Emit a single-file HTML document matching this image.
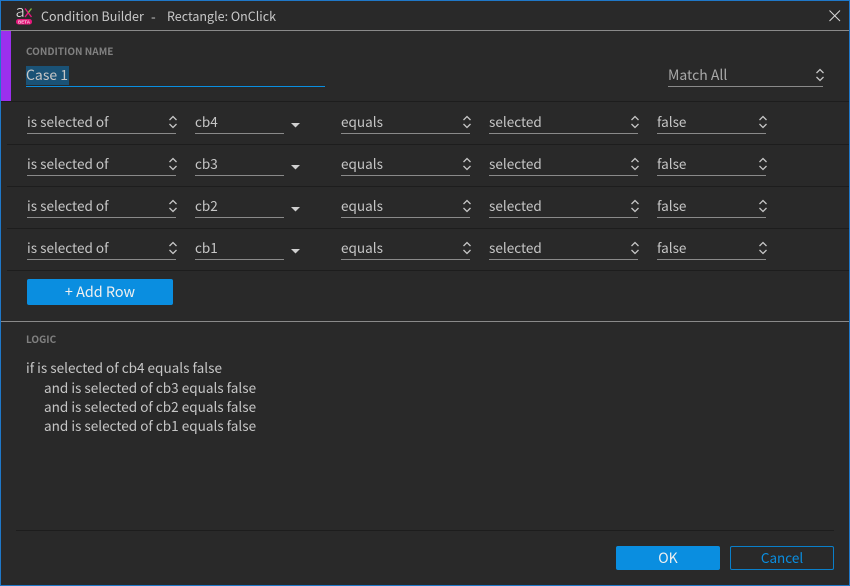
<!DOCTYPE html>
<html><head><meta charset="utf-8">
<style>
html,body{margin:0;padding:0;background:#292929;}
#r{position:relative;width:850px;height:586px;overflow:hidden;background:#292929;color:#c6c6c6;font-family:"Noto Sans CJK JP","Liberation Sans",sans-serif;font-size:13.55px;}
#r div{position:absolute;box-sizing:border-box;}
.t{white-space:nowrap;line-height:18px;height:18px;}
.u{height:1px;background:#8a8a8a;}
.s{height:1px;background:#1d1d1d;}
.w{left:0;width:850px;height:42px;}
svg{position:absolute;overflow:visible;}
.c{width:10px;height:14px;top:2px;}
.d{width:10px;height:6px;top:10px;left:291px;}
</style></head><body><div id="r">
<div style="left:0;top:0;width:850px;height:1px;background:#1f78c8"></div>
<div style="left:0;top:585px;width:850px;height:1px;background:#1f78c8"></div>
<div style="left:0;top:0;width:1px;height:586px;background:#1f78c8"></div>
<div style="left:849px;top:0;width:1px;height:586px;background:#1f78c8"></div>

<svg style="left:0;top:0" width="40" height="30">
<text x="15.500" y="17" font-family="Noto Sans CJK JP, sans-serif" font-size="17" font-weight="300" fill="#e8e8e8">a</text>
<path d="M25 8.500L31.500 17" stroke="#e5177b" stroke-width="1.400" fill="none"/>
<path d="M31.500 8.500L28.200 12.700" stroke="#7ab648" stroke-width="1.400" fill="none"/>
<path d="M28.200 12.700L25 17" stroke="#e5177b" stroke-width="1.400" fill="none"/>
<rect x="16" y="19" width="16" height="5.500" rx="2.500" fill="#e5177b"/>
<text x="24" y="23.600" text-anchor="middle" font-family="Liberation Sans, sans-serif" font-size="4.500" font-weight="700" fill="#f5d0e0">BETA</text>
</svg>

<div class="t" style="left:41px;top:7px;color:#c9c9c9;font-size:12.500px">Condition Builder</div>
<div class="t" style="left:151px;top:7px;color:#c9c9c9">-</div>
<div class="t" style="left:167px;top:7px;color:#c9c9c9;font-size:12.500px">Rectangle: OnClick</div>
<svg style="left:829px;top:10px" width="12" height="12"><path d="M0.500 0.500L11 11M11 0.500L0.500 11" stroke="#d8d8d8" stroke-width="1" fill="none"/></svg>
<div style="left:1px;top:30px;width:848px;height:1px;background:#8a8a8a"></div>

<div style="left:1px;top:31px;width:10px;height:70px;background:#9b30ee"></div>
<div class="t" style="left:26px;top:42px;font-size:10px;font-weight:700;color:#808080">CONDITION NAME</div>
<div style="left:26px;top:66px;width:43px;height:19px;background:#1a5276"></div>
<div class="t" style="left:26px;top:66px;color:#c6c6c6;font-size:14px">Case 1</div>
<div style="left:26px;top:86px;width:299px;height:1px;background:#0a8ee0"></div>
<div class="t" style="left:668px;top:66px;font-size:14px;color:#a8a8a8">Match All</div>
<div class="u" style="left:668px;top:86px;width:155px"></div>
<svg class="c" style="left:815px;top:68px"><path d="M1.500 5L5 1.500L8.500 5M1.500 9L5 12.500L8.500 9" stroke="#c6c6c6" stroke-width="1.300" fill="none"/></svg>
<div class="s" style="left:1px;top:101px;width:848px"></div>

<div class="w" style="top:113px">
<div class="t" style="left:27px;top:-1px">is selected of</div><div class="u" style="left:27px;top:20px;width:149px"></div>
<svg class="c" style="left:168px"><path d="M1.500 5L5 1.500L8.500 5M1.500 9L5 12.500L8.500 9" stroke="#c6c6c6" stroke-width="1.300" fill="none"/></svg>
<div class="t" style="left:195px;top:-1px">cb4</div><div class="u" style="left:195px;top:20px;width:89px"></div>
<svg class="d"><path d="M0 0H9L4.500 4.500Z" fill="#d0d0d0"/></svg>
<div class="t" style="left:341px;top:-1px">equals</div><div class="u" style="left:341px;top:20px;width:129px"></div>
<svg class="c" style="left:462px"><path d="M1.500 5L5 1.500L8.500 5M1.500 9L5 12.500L8.500 9" stroke="#c6c6c6" stroke-width="1.300" fill="none"/></svg>
<div class="t" style="left:489px;top:-1px">selected</div><div class="u" style="left:489px;top:20px;width:149px"></div>
<svg class="c" style="left:630px"><path d="M1.500 5L5 1.500L8.500 5M1.500 9L5 12.500L8.500 9" stroke="#c6c6c6" stroke-width="1.300" fill="none"/></svg>
<div class="t" style="left:657px;top:-1px">false</div><div class="u" style="left:657px;top:20px;width:109px"></div>
<svg class="c" style="left:758px"><path d="M1.500 5L5 1.500L8.500 5M1.500 9L5 12.500L8.500 9" stroke="#c6c6c6" stroke-width="1.300" fill="none"/></svg>
<div class="s" style="left:7px;top:31px;width:842px"></div>
</div>

<div class="w" style="top:155px">
<div class="t" style="left:27px;top:-1px">is selected of</div><div class="u" style="left:27px;top:20px;width:149px"></div>
<svg class="c" style="left:168px"><path d="M1.500 5L5 1.500L8.500 5M1.500 9L5 12.500L8.500 9" stroke="#c6c6c6" stroke-width="1.300" fill="none"/></svg>
<div class="t" style="left:195px;top:-1px">cb3</div><div class="u" style="left:195px;top:20px;width:89px"></div>
<svg class="d"><path d="M0 0H9L4.500 4.500Z" fill="#d0d0d0"/></svg>
<div class="t" style="left:341px;top:-1px">equals</div><div class="u" style="left:341px;top:20px;width:129px"></div>
<svg class="c" style="left:462px"><path d="M1.500 5L5 1.500L8.500 5M1.500 9L5 12.500L8.500 9" stroke="#c6c6c6" stroke-width="1.300" fill="none"/></svg>
<div class="t" style="left:489px;top:-1px">selected</div><div class="u" style="left:489px;top:20px;width:149px"></div>
<svg class="c" style="left:630px"><path d="M1.500 5L5 1.500L8.500 5M1.500 9L5 12.500L8.500 9" stroke="#c6c6c6" stroke-width="1.300" fill="none"/></svg>
<div class="t" style="left:657px;top:-1px">false</div><div class="u" style="left:657px;top:20px;width:109px"></div>
<svg class="c" style="left:758px"><path d="M1.500 5L5 1.500L8.500 5M1.500 9L5 12.500L8.500 9" stroke="#c6c6c6" stroke-width="1.300" fill="none"/></svg>
<div class="s" style="left:7px;top:31px;width:842px"></div>
</div>

<div class="w" style="top:197px">
<div class="t" style="left:27px;top:-1px">is selected of</div><div class="u" style="left:27px;top:20px;width:149px"></div>
<svg class="c" style="left:168px"><path d="M1.500 5L5 1.500L8.500 5M1.500 9L5 12.500L8.500 9" stroke="#c6c6c6" stroke-width="1.300" fill="none"/></svg>
<div class="t" style="left:195px;top:-1px">cb2</div><div class="u" style="left:195px;top:20px;width:89px"></div>
<svg class="d"><path d="M0 0H9L4.500 4.500Z" fill="#d0d0d0"/></svg>
<div class="t" style="left:341px;top:-1px">equals</div><div class="u" style="left:341px;top:20px;width:129px"></div>
<svg class="c" style="left:462px"><path d="M1.500 5L5 1.500L8.500 5M1.500 9L5 12.500L8.500 9" stroke="#c6c6c6" stroke-width="1.300" fill="none"/></svg>
<div class="t" style="left:489px;top:-1px">selected</div><div class="u" style="left:489px;top:20px;width:149px"></div>
<svg class="c" style="left:630px"><path d="M1.500 5L5 1.500L8.500 5M1.500 9L5 12.500L8.500 9" stroke="#c6c6c6" stroke-width="1.300" fill="none"/></svg>
<div class="t" style="left:657px;top:-1px">false</div><div class="u" style="left:657px;top:20px;width:109px"></div>
<svg class="c" style="left:758px"><path d="M1.500 5L5 1.500L8.500 5M1.500 9L5 12.500L8.500 9" stroke="#c6c6c6" stroke-width="1.300" fill="none"/></svg>
<div class="s" style="left:7px;top:31px;width:842px"></div>
</div>

<div class="w" style="top:239px">
<div class="t" style="left:27px;top:-1px">is selected of</div><div class="u" style="left:27px;top:20px;width:149px"></div>
<svg class="c" style="left:168px"><path d="M1.500 5L5 1.500L8.500 5M1.500 9L5 12.500L8.500 9" stroke="#c6c6c6" stroke-width="1.300" fill="none"/></svg>
<div class="t" style="left:195px;top:-1px">cb1</div><div class="u" style="left:195px;top:20px;width:89px"></div>
<svg class="d"><path d="M0 0H9L4.500 4.500Z" fill="#d0d0d0"/></svg>
<div class="t" style="left:341px;top:-1px">equals</div><div class="u" style="left:341px;top:20px;width:129px"></div>
<svg class="c" style="left:462px"><path d="M1.500 5L5 1.500L8.500 5M1.500 9L5 12.500L8.500 9" stroke="#c6c6c6" stroke-width="1.300" fill="none"/></svg>
<div class="t" style="left:489px;top:-1px">selected</div><div class="u" style="left:489px;top:20px;width:149px"></div>
<svg class="c" style="left:630px"><path d="M1.500 5L5 1.500L8.500 5M1.500 9L5 12.500L8.500 9" stroke="#c6c6c6" stroke-width="1.300" fill="none"/></svg>
<div class="t" style="left:657px;top:-1px">false</div><div class="u" style="left:657px;top:20px;width:109px"></div>
<svg class="c" style="left:758px"><path d="M1.500 5L5 1.500L8.500 5M1.500 9L5 12.500L8.500 9" stroke="#c6c6c6" stroke-width="1.300" fill="none"/></svg>
<div class="s" style="left:7px;top:31px;width:842px"></div>
</div>

<div class="t" style="left:27px;top:279px;width:146px;height:26px;line-height:26px;background:#0a8ee0;border-radius:2px;color:#f0f0f0;text-align:center;font-size:14.400px">+ Add Row</div>
<div style="left:1px;top:321px;width:848px;height:1px;background:#8a8a8a"></div>

<div class="t" style="left:26px;top:330px;font-size:10px;font-weight:700;color:#808080">LOGIC</div>
<div class="t" style="left:26px;top:358px">if is selected of cb4 equals false</div>
<div class="t" style="left:44px;top:378px">and is selected of cb3 equals false</div>
<div class="t" style="left:44px;top:397px">and is selected of cb2 equals false</div>
<div class="t" style="left:44px;top:416px">and is selected of cb1 equals false</div>

<div class="s" style="left:16px;top:530px;width:818px"></div>
<div class="t" style="left:616px;top:546px;width:104px;height:24px;line-height:24px;background:#0a8ee0;border-radius:2px;color:#f0f0f0;text-align:center;font-size:14px">OK</div>
<div class="t" style="left:730px;top:546px;width:104px;height:24px;line-height:20px;border:1px solid #0a7fc9;border-radius:2px;color:#0a8ee0;text-align:center;font-size:13.500px">Cancel</div>
</div></body></html>
